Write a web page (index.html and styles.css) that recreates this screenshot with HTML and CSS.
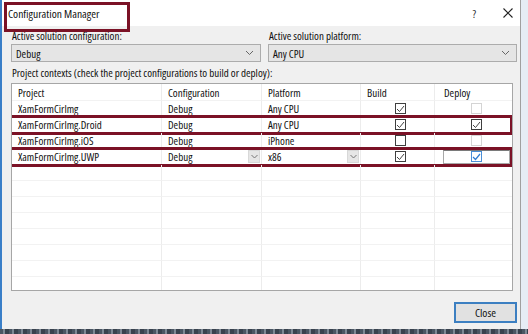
FILE: index.html
```html
<!DOCTYPE html>
<html>
<head>
<meta charset="utf-8">
<link rel="stylesheet" href="styles.css">
</head>
<body>
<div class="screen">
  <div class="window">
    <div class="titlebar">
      <span class="title">Configuration Manager</span>
      <span class="tb-spacer"></span>
      <span class="help">?</span>
      <span class="close-x">
        <svg width="10" height="10" viewBox="0 0 10 10"><path d="M0.5 0.5 L9.5 9.5 M9.5 0.5 L0.5 9.5" stroke="#222" stroke-width="1.1" fill="none"/></svg>
      </span>
    </div>
    <div class="content">
      <div class="selectors">
        <div class="field">
          <div class="label">Active solution configuration:</div>
          <div class="combo"><span>Debug</span><svg class="chev" width="9" height="6" viewBox="0 0 9 6"><path d="M1 1 L4.5 4.5 L8 1" stroke="#666" fill="none"/></svg></div>
        </div>
        <div class="field">
          <div class="label">Active solution platform:</div>
          <div class="combo"><span>Any CPU</span><svg class="chev" width="9" height="6" viewBox="0 0 9 6"><path d="M1 1 L4.5 4.5 L8 1" stroke="#666" fill="none"/></svg></div>
        </div>
      </div>
      <div class="label contexts">Project contexts (check the project configurations to build or deploy):</div>
      <div class="grid">
        <div class="row head">
          <div class="cell">Project</div>
          <div class="cell">Configuration</div>
          <div class="cell">Platform</div>
          <div class="cell">Build</div>
          <div class="cell deploy-h">Deploy</div>
        </div>
        <div class="row">
          <div class="cell">XamFormCirlmg</div>
          <div class="cell">Debug</div>
          <div class="cell">Any CPU</div>
          <div class="cell center"><span class="cb checked"><svg width="9" height="8" viewBox="0 0 9 8"><path d="M1 4 L3.5 6.5 L8 1" stroke="#444" fill="none"/></svg></span></div>
          <div class="cell center"><span class="cb disabled"></span></div>
        </div>
        <div class="row marked">
          <div class="cell">XamFormCirlmg.Droid</div>
          <div class="cell">Debug</div>
          <div class="cell">Any CPU</div>
          <div class="cell center"><span class="cb checked"><svg width="9" height="8" viewBox="0 0 9 8"><path d="M1 4 L3.5 6.5 L8 1" stroke="#444" fill="none"/></svg></span></div>
          <div class="cell center"><span class="cb checked"><svg width="9" height="8" viewBox="0 0 9 8"><path d="M1 4 L3.5 6.5 L8 1" stroke="#444" fill="none"/></svg></span></div>
        </div>
        <div class="row">
          <div class="cell">XamFormCirlmg.iOS</div>
          <div class="cell">Debug</div>
          <div class="cell">iPhone</div>
          <div class="cell center"><span class="cb"></span></div>
          <div class="cell center"><span class="cb disabled"></span></div>
        </div>
        <div class="row marked">
          <div class="cell">XamFormCirlmg.UWP</div>
          <div class="cell drop"><span>Debug</span><span class="dbtn"><svg width="7" height="5" viewBox="0 0 7 5"><path d="M0.5 1 L3.5 4 L6.5 1" stroke="#777" fill="none"/></svg></span></div>
          <div class="cell drop"><span>x86</span><span class="dbtn"><svg width="7" height="5" viewBox="0 0 7 5"><path d="M0.5 1 L3.5 4 L6.5 1" stroke="#777" fill="none"/></svg></span></div>
          <div class="cell center"><span class="cb checked"><svg width="9" height="8" viewBox="0 0 9 8"><path d="M1 4 L3.5 6.5 L8 1" stroke="#444" fill="none"/></svg></span></div>
          <div class="cell center"><span class="editbox"><span class="cb focus checked"><svg width="9" height="8" viewBox="0 0 9 8"><path d="M1 4 L3.5 6.5 L8 1" stroke="#2f7bd0" stroke-width="1.2" fill="none"/></svg></span></span></div>
        </div>
        <div class="row empty"><div class="cell"></div><div class="cell"></div><div class="cell"></div><div class="cell"></div><div class="cell"></div></div>
        <div class="row empty"><div class="cell"></div><div class="cell"></div><div class="cell"></div><div class="cell"></div><div class="cell"></div></div>
        <div class="row empty"><div class="cell"></div><div class="cell"></div><div class="cell"></div><div class="cell"></div><div class="cell"></div></div>
        <div class="row empty"><div class="cell"></div><div class="cell"></div><div class="cell"></div><div class="cell"></div><div class="cell"></div></div>
        <div class="row empty"><div class="cell"></div><div class="cell"></div><div class="cell"></div><div class="cell"></div><div class="cell"></div></div>
        <div class="row empty"><div class="cell"></div><div class="cell"></div><div class="cell"></div><div class="cell"></div><div class="cell"></div></div>
        <div class="row empty"><div class="cell"></div><div class="cell"></div><div class="cell"></div><div class="cell"></div><div class="cell"></div></div>
        <div class="row empty"><div class="cell"></div><div class="cell"></div><div class="cell"></div><div class="cell"></div><div class="cell"></div></div>
      </div>
      <div class="footer">
        <button class="btn">Close</button>
      </div>
    </div>
  </div>
  <div class="taskbar"></div>
</div>
</body>
</html>
```

FILE: styles.css
```css
* { box-sizing: border-box; }
html, body { margin: 0; padding: 0; }
body {
  width: 528px;
  height: 334px;
  overflow: hidden;
  font-family: "Open Sans", "Noto Sans", sans-serif;
  font-stretch: condensed;
  font-weight: 500;
  font-size: 11px;
  color: #111111;
  background: #e6edf5;
}
.screen {
  width: 528px;
  height: 334px;
  display: flex;
  flex-direction: column;
}
.window {
  width: 521px;
  height: 329px;
  border-left: 2px solid #3a7fc8;
  border-right: 1px solid #a0a0a0;
  background: #f0f0f0;
  display: flex;
  flex-direction: column;
}
.titlebar {
  position: relative;
  height: 26px;
  background: #ffffff;
  display: flex;
  align-items: center;
  padding: 0 7px 0 6px;
}
.titlebar::after {
  content: "";
  position: absolute;
  left: 2px;
  top: 2px;
  width: 120px;
  height: 24px;
  border: 3px solid #7b1226;
}
.title {
  font-size: 11.5px;
}
.tb-spacer { flex: 1; }
.help { font-size: 11.5px; margin-right: 27px; color: #222; }
.close-x { display: flex; align-items: center; }
.content {
  flex: 1;
  padding: 3px 3px 0 9px;
  display: flex;
  flex-direction: column;
}
.selectors {
  display: grid;
  grid-template-columns: 250px 249px;
  column-gap: 7px;
}
.label {
  height: 14px;
  line-height: 14px;
  padding-left: 1px;
  white-space: nowrap;
}
.combo {
  margin-top: 1px;
  height: 18px;
  border: 1px solid #acacac;
  background: #e5e5e5;
  display: flex;
  align-items: center;
  justify-content: space-between;
  padding: 0 6px 0 4px;
}
.contexts { margin-top: 4px; }
.grid {
  margin-top: 3px;
  width: 502px;
  height: 208px;
  border: 1px solid #a6a6a6;
  background: #ffffff;
  display: flex;
  flex-direction: column;
  overflow: hidden;
}
.row {
  display: grid;
  grid-template-columns: 150px 100px 99px 74px 1fr;
  height: 16px;
  position: relative;
  flex: none;
}
.row.head { height: 17px; }
.cell {
  border-right: 1px solid #ececec;
  border-bottom: 1px solid #f2f2f2;
  padding-left: 6px;
  display: flex;
  align-items: center;
  white-space: nowrap;
}
.row .cell:last-child { border-right: none; }
.deploy-h { padding-left: 9px; }
.center { justify-content: center; padding-left: 6px; }
.cell.drop { justify-content: space-between; padding-right: 1px; }
.dbtn {
  width: 12px;
  height: 13px;
  background: #e6e6e6;
  border: 1px solid #d8d8d8;
  display: flex;
  align-items: center;
  justify-content: center;
}
.cb {
  width: 11px;
  height: 11px;
  border: 1px solid #3f3f3f;
  background: #fff;
  display: flex;
  align-items: center;
  justify-content: center;
}
.cb.disabled { border-color: #d4d4d4; }
.cb.focus { border-color: #4a8fd8; }
.editbox {
  width: 67px;
  height: 14px;
  border: 1px solid #a8a8a8;
  border-top-color: #7a7a7a;
  display: flex;
  align-items: center;
  justify-content: center;
}
.row.marked::after {
  content: "";
  position: absolute;
  left: -4px;
  right: -1px;
  top: -2px;
  bottom: -2px;
  border: 3px solid #7b1226;
  pointer-events: none;
}
.footer {
  display: flex;
  justify-content: flex-end;
  padding-top: 11px;
}
.btn {
  width: 63px;
  height: 21px;
  border: 2px solid #3c7fc1;
  background: #e1e1e1;
  font-family: "Open Sans", "Noto Sans", sans-serif;
  font-stretch: condensed;
  font-weight: 500;
  font-size: 11.5px;
  color: #111111;
  padding: 0;
}
.taskbar {
  flex: 1;
  background: repeating-linear-gradient(90deg, #4b5663 0 3px, #7d8894 3px 5px, #39424e 5px 9px);
}
```
